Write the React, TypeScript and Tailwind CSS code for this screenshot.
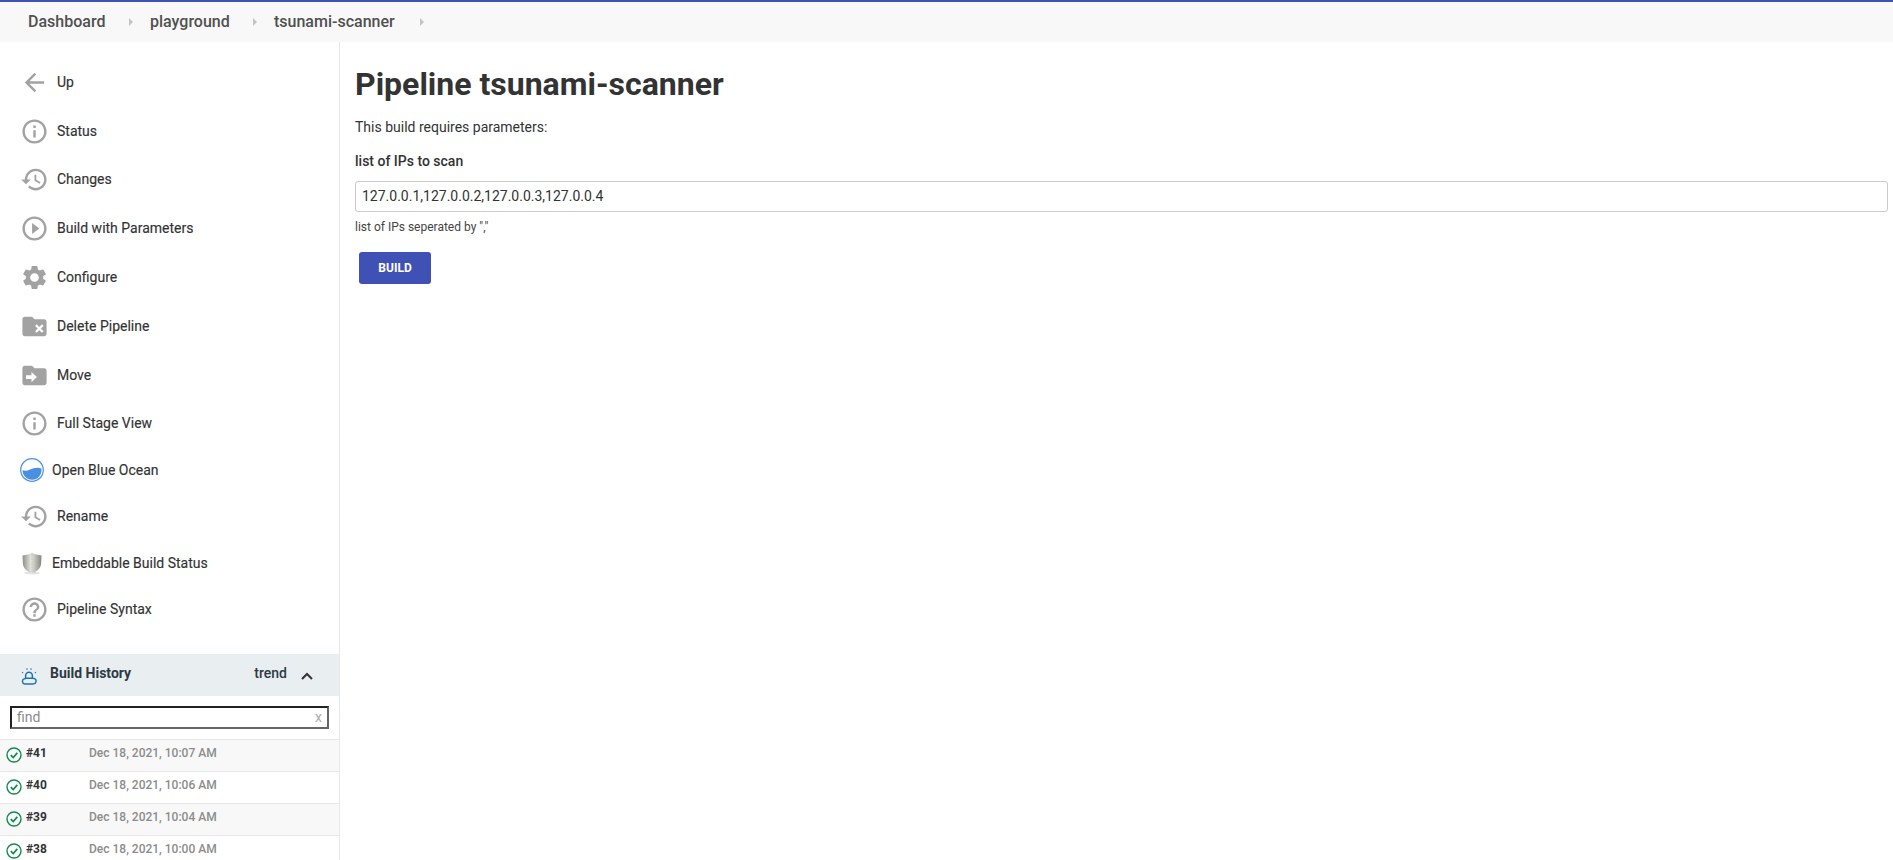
import { ReactNode } from 'react';

const INFO = 'M11 17h2v-6h-2v6zm1-15C6.48 2 2 6.48 2 12s4.48 10 10 10 10-4.48 10-10S17.52 2 12 2zm0 18c-4.41 0-8-3.59-8-8s3.59-8 8-8 8 3.59 8 8-3.59 8-8 8zM11 9h2V7h-2v2z';
const HISTORY = 'M13 3c-4.97 0-9 4.03-9 9H1l3.89 3.89.07.14L9 12H6c0-3.87 3.13-7 7-7s7 3.13 7 7-3.13 7-7 7c-1.93 0-3.68-.79-4.94-2.06l-1.42 1.42C8.27 19.99 10.51 21 13 21c4.97 0 9-4.03 9-9s-4.03-9-9-9zm-1 5v5l4.28 2.54.72-1.21-3.5-2.08V8H12z';
const PLAY = 'M10 16.5l6-4.5-6-4.5v9zM12 2C6.48 2 2 6.48 2 12s4.48 10 10 10 10-4.48 10-10S17.52 2 12 2zm0 18c-4.41 0-8-3.59-8-8s3.59-8 8-8 8 3.59 8 8-3.59 8-8 8z';
const BACK = 'M20 11H7.83l5.59-5.59L12 4l-8 8 8 8 1.41-1.41L7.83 13H20v-2z';
const GEAR = 'M19.14 12.94c.04-.3.06-.61.06-.94 0-.32-.02-.64-.07-.94l2.03-1.58c.18-.14.23-.41.12-.61l-1.92-3.32c-.12-.22-.37-.29-.59-.22l-2.39.96c-.5-.38-1.03-.7-1.62-.94l-.36-2.54c-.04-.24-.24-.41-.48-.41h-3.84c-.24 0-.43.17-.47.41l-.36 2.54c-.59.24-1.13.57-1.62.94l-2.39-.96c-.22-.08-.47 0-.59.22L2.74 8.87c-.12.21-.08.47.12.61l2.03 1.58c-.05.3-.09.63-.09.94s.02.64.07.94l-2.03 1.58c-.18.14-.23.41-.12.61l1.92 3.32c.12.22.37.29.59.22l2.39-.96c.5.38 1.03.7 1.62.94l.36 2.54c.05.24.24.41.48.41h3.84c.24 0 .44-.17.47-.41l.36-2.54c.59-.24 1.13-.56 1.62-.94l2.39.96c.22.08.47 0 .59-.22l1.92-3.32c.12-.22.07-.47-.12-.61l-2.01-1.58zM12 15.6c-1.98 0-3.6-1.62-3.6-3.6s1.62-3.6 3.6-3.6 3.6 1.62 3.6 3.6-1.62 3.6-3.6 3.6z';
const HELP = 'M11 18h2v-2h-2v2zm1-16C6.48 2 2 6.48 2 12s4.48 10 10 10 10-4.48 10-10S17.52 2 12 2zm0 18c-4.41 0-8-3.59-8-8s3.59-8 8-8 8 3.59 8 8-3.59 8-8 8zm0-14c-2.21 0-4 1.79-4 4h2c0-1.1.9-2 2-2s2 .9 2 2c0 2-3 1.75-3 5h2c0-2.25 3-2.5 3-5 0-2.21-1.79-4-4-4z';
const FOLDER = 'M10 4H4c-1.1 0-2 .9-2 2v12c0 1.1.9 2 2 2h16c1.1 0 2-.9 2-2V8c0-1.1-.9-2-2-2h-8l-2-2z';

function Mat({ d, children }: { d: string; children?: ReactNode }) {
  return (
    <svg viewBox="0 0 24 24" className="w-[29px] h-[29px] shrink-0 fill-[#a2a2a2]">
      <path d={d} />
      {children}
    </svg>
  );
}

function OceanIcon() {
  return (
    <svg viewBox="0 0 24 24" className="w-[24px] h-[24px] shrink-0">
      <circle cx="12" cy="12" r="11.3" fill="#fff" stroke="#4a90e2" strokeWidth="1.2" />
      <path d="M2.500 12.300c2.500.9 5 .5 7.500-.7 3-1.500 7.500-2.700 11.500-1.200.6 6.300-3.700 11.300-9.500 11.300-5.500 0-9.600-4.300-9.500-9.400z" fill="#4a90e2" />
    </svg>
  );
}

function ShieldIcon() {
  return (
    <svg viewBox="0 0 24 24" className="w-[24px] h-[24px] shrink-0">
      <defs>
        <linearGradient id="shield" x1="0" y1="0" x2="1" y2="0">
          <stop offset="0" stopColor="#8f8f88" />
          <stop offset="0.45" stopColor="#e6e6e0" />
          <stop offset="1" stopColor="#85857e" />
        </linearGradient>
      </defs>
      <ellipse cx="12" cy="22" rx="8" ry="1.300" fill="#e4e4e4" />
      <path d="M12 1.500c2.500 1.800 6 2.500 9.500 3l-.4 8.500c-.5 4-4 7.500-9.100 9.500C6.900 20.500 3.400 17 2.900 13L2.500 4.500c3.500-.5 7-1.200 9.500-3z" fill="url(#shield)" />
      <path d="M12 3v18" stroke="#b0b0aa" strokeWidth="0.8" strokeDasharray="1 1.500" />
    </svg>
  );
}

const sideItems: { label: string; icon: ReactNode; h: string }[] = [
  { label: 'Up', icon: <Mat d={BACK} />, h: 'h-[49px]' },
  { label: 'Status', icon: <Mat d={INFO} />, h: 'h-[49px]' },
  { label: 'Changes', icon: <Mat d={HISTORY} />, h: 'h-[48px] pb-[2px]' },
  { label: 'Build with Parameters', icon: <Mat d={PLAY} />, h: 'h-[49px]' },
  { label: 'Configure', icon: <Mat d={GEAR} />, h: 'h-[49px]' },
  {
    label: 'Delete Pipeline',
    icon: (
      <Mat d={FOLDER}>
        <path d="m12.500 11.500 1.300-1.300 2.200 2.200 2.200-2.200 1.300 1.300-2.200 2.200 2.200 2.200-1.300 1.300-2.200-2.200-2.200 2.200-1.300-1.300 2.200-2.200z" fill="#fff" />
      </Mat>
    ),
    h: 'h-[49px]',
  },
  {
    label: 'Move',
    icon: (
      <Mat d={FOLDER}>
        <path d="M5 11.700h4.500V9l4.500 4.300-4.500 4.300v-2.700H5z" fill="#fff" />
      </Mat>
    ),
    h: 'h-[48px]',
  },
  { label: 'Full Stage View', icon: <Mat d={INFO} />, h: 'h-[48px]' },
  { label: 'Open Blue Ocean', icon: <OceanIcon />, h: 'h-[46px]' },
  { label: 'Rename', icon: <Mat d={HISTORY} />, h: 'h-[47px]' },
  { label: 'Embeddable Build Status', icon: <ShieldIcon />, h: 'h-[46px]' },
  { label: 'Pipeline Syntax', icon: <Mat d={HELP} />, h: 'h-[47px]' },
];

const builds = [
  { id: '#41', date: 'Dec 18, 2021, 10:07 AM' },
  { id: '#40', date: 'Dec 18, 2021, 10:06 AM' },
  { id: '#39', date: 'Dec 18, 2021, 10:04 AM' },
  { id: '#38', date: 'Dec 18, 2021, 10:00 AM' },
];

function Crumb({ label, className }: { label: string; className: string }) {
  return (
    <div className={`flex items-center ${className}`}>
      <span className="text-[16px] font-medium text-[#505050]">{label}</span>
    </div>
  );
}

function Caret({ className }: { className: string }) {
  return <span className={`w-0 h-0 border-y-[4px] border-y-transparent border-l-[4px] border-l-[#c4c4c4] ${className}`} />;
}

export default function App() {
  return (
    <div className="h-[860px] overflow-hidden bg-white font-['Roboto',sans-serif] text-[14px] text-[#333]">
      {/* breadcrumb bar */}
      <div className="h-[42px] bg-[#f8f8f8] border-t-2 border-[#3f51b5] flex items-center pl-[28px]">
        <Crumb label="Dashboard" className="w-[101px]" />
        <Caret className="mr-[17px]" />
        <Crumb label="playground" className="w-[103px]" />
        <Caret className="mr-[17px]" />
        <Crumb label="tsunami-scanner" className="w-[146px]" />
        <Caret className="" />
      </div>

      <div className="flex h-[818px]">
        {/* side panel */}
        <aside className="w-[340px] shrink-0 border-r border-[#e8e8e8] pt-[16px] overflow-hidden">
          <nav className="h-[596px]">
            {sideItems.map((item) => (
              <div key={item.label} className={`flex items-center gap-[8px] pl-[20px] ${item.h}`}>
                {item.icon}
                <span className="text-[#333] [-webkit-text-stroke:0.15px_#333]">{item.label}</span>
              </div>
            ))}
          </nav>

          <div className="h-[42px] bg-[#e9eef1] flex items-center pl-[20px] pr-[26px] pb-[4px]">
            <svg viewBox="0 0 24 24" className="w-[18px] h-[18px] shrink-0 fill-none stroke-[#1d74b0] stroke-[2px] mt-[5px]">
              <path d="M6 22.500h12a3.700 3.700 0 0 0 1.500-7c-1-.5-2-.5-3-.5H9c-1.500 0-2 .2-3.500.8A3.500 3.500 0 0 0 6 22.500z" />
              <path d="M7.500 15v-3.500a4.500 4.500 0 0 1 9 0V15M9 2l.5 1.500M15 2l-.5 1.500M3 7l1 .8M21 7l-1 .8" />
            </svg>
            <span className="ml-[12px] font-bold text-[14px] text-[#2d3a45]">Build History</span>
            <span className="ml-auto mr-[-1px] font-medium text-[14px] text-[#2d3a45]">trend</span>
            <svg viewBox="0 0 12 8" className="ml-[15px] w-[12px] h-[8px] fill-none stroke-[#333] stroke-[2px] mt-[5px]">
              <path d="M1 7l5-5 5 5" />
            </svg>
          </div>

          <div className="h-[43px] flex items-center px-[10px]">
            <div className="w-[319px] h-[23px] border-2 border-t-[#222] border-l-[#222] border-r-[#666] border-b-[#666] flex items-center justify-between pl-[5px] pr-[5px] text-[14px] text-[#8b8b8b]">
              <span>find</span>
              <span className="text-[#aaa]">x</span>
            </div>
          </div>

          {builds.map((b, i) => (
            <div
              key={b.id}
              className={`h-[32px] border-t border-[#e8e8e8] flex pl-[6px] pt-[4px] ${i % 2 === 0 ? 'bg-[#f8f8f8]' : 'bg-white'}`}
            >
              <svg viewBox="0 0 16 16" className="w-[16px] h-[16px] mt-[3px] shrink-0 fill-none stroke-[#138a52]">
                <circle cx="8" cy="8" r="7" strokeWidth="1.400" />
                <path d="M4.800 8.200 7.200 10.500 11.300 5.900" strokeWidth="1.700" />
              </svg>
              <span className="ml-[4px] w-[63px] text-[12px] font-bold text-[#333]">{b.id}</span>
              <span className="text-[12px] font-medium text-[#8c8c8c]">{b.date}</span>
            </div>
          ))}
        </aside>

        {/* main content */}
        <main className="flex-1 pl-[15px] pr-[5px] pt-[22px]">
          <h1 className="text-[32px] font-bold leading-[40px] text-[#333]">Pipeline tsunami-scanner</h1>
          <p className="mt-[13px] leading-[20px]">This build requires parameters:</p>
          <div className="mt-[14px] font-medium leading-[20px]">list of IPs to scan</div>
          <div className="mt-[10px] h-[31px] border border-[#ccc] rounded-[3px] flex items-center px-[6px] text-[14px] text-[#333]">
            127.0.0.1,127.0.0.2,127.0.0.3,127.0.0.4
          </div>
          <div className="mt-[7px] text-[12px] leading-[16px] text-[#444]">list of IPs seperated by ","</div>
          <button className="mt-[17px] ml-[4px] w-[72px] h-[32px] rounded-[3px] bg-[#3f51b5] text-white text-[12px] font-bold">
            BUILD
          </button>
        </main>
      </div>
    </div>
  );
}
